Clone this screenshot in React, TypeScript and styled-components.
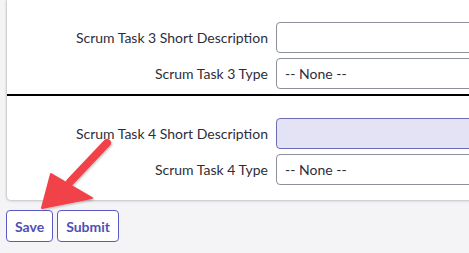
import React from "react";
import styled, { createGlobalStyle } from "styled-components";

const GlobalStyle = createGlobalStyle`
  html, body {
    margin: 0;
    padding: 0;
    background: #f4f4f6;
    overflow: hidden;
    font-family: Lato, "Liberation Sans", sans-serif;
  }
`;

const Page = styled.div`
  position: relative;
  width: 469px;
  height: 253px;
  overflow: hidden;
  padding-left: 7px;
  box-sizing: border-box;
`;

const Card = styled.div`
  width: 700px;
  background: #fff;
  border-radius: 0 0 4px 4px;
  box-shadow: 0 1px 3px rgba(0, 0, 0, 0.18), -1px 0 2px rgba(0, 0, 0, 0.12);
`;

const Section = styled.div<{ $top: number; $bottom: number }>`
  display: flex;
  flex-direction: column;
  gap: 5px;
  padding: ${(p) => p.$top}px 0 ${(p) => p.$bottom}px;
`;

const Divider = styled.div`
  height: 2px;
  background: #000;
`;

const Row = styled.div`
  display: flex;
  align-items: center;
  gap: 8px;
`;

const Label = styled.label`
  width: 261px;
  text-align: right;
  font-size: 14px;
  color: #2e2e3a;
`;

const Field = styled.div<{ $active?: boolean }>`
  flex: 1;
  height: 31px;
  box-sizing: border-box;
  border: 1px solid ${(p) => (p.$active ? "#6d6db6" : "#8c909a")};
  background: ${(p) => (p.$active ? "#e3e3f5" : "#fff")};
  border-radius: 4px;
  display: flex;
  align-items: center;
  padding-left: 8px;
  font-size: 14px;
  color: #2e2e3a;
`;

const Actions = styled.div`
  display: flex;
  gap: 4px;
  margin: 10px 0 0 -1px;
`;

const Button = styled.button`
  height: 32px;
  padding: 0 8px;
  border: 1px solid #5a5ac2;
  border-radius: 4px;
  background: #fff;
  color: #4f4fb4;
  font-family: Lato, "Liberation Sans", sans-serif;
  font-weight: 700;
  font-size: 14px;
`;

const Arrow = styled.svg`
  position: absolute;
  left: 0;
  top: 0;
  pointer-events: none;
`;

export default function App() {
  return (
    <>
      <GlobalStyle />
      <Page>
        <Card>
          <Section $top={22} $bottom={5}>
            <Row>
              <Label>Scrum Task 3 Short Description</Label>
              <Field />
            </Row>
            <Row>
              <Label>Scrum Task 3 Type</Label>
              <Field>-- None --</Field>
            </Row>
          </Section>
          <Divider />
          <Section $top={22} $bottom={15}>
            <Row>
              <Label>Scrum Task 4 Short Description</Label>
              <Field $active />
            </Row>
            <Row>
              <Label>Scrum Task 4 Type</Label>
              <Field>-- None --</Field>
            </Row>
          </Section>
        </Card>
        <Actions>
          <Button>Save</Button>
          <Button>Submit</Button>
        </Actions>
        <Arrow width="469" height="253" viewBox="0 0 469 253">
          <defs>
            <filter id="sh" x="-20%" y="-20%" width="140%" height="140%">
              <feDropShadow dx="1" dy="1" stdDeviation="1" floodColor="#000" floodOpacity="0.25" />
            </filter>
          </defs>
          <g filter="url(#sh)" fill="#f2424a" stroke="#f2424a" strokeLinejoin="round">
            <line x1="107" y1="143" x2="70" y2="182" strokeWidth="8" strokeLinecap="round" />
            <polygon points="42,208 51,174 92,198" strokeWidth="2" />
          </g>
        </Arrow>
      </Page>
    </>
  );
}
